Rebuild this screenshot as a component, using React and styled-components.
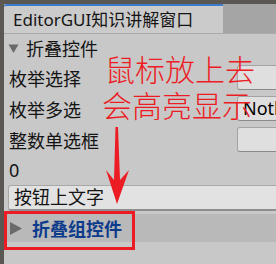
import React from 'react'
import styled, { createGlobalStyle } from 'styled-components'

const GlobalStyle = createGlobalStyle`
  html, body {
    margin: 0;
    padding: 0;
    background: #5b5854;
    overflow: hidden;
  }
  body {
    width: 276px;
    height: 264px;
    font-family: 'Noto Sans', 'Noto Sans CJK SC', sans-serif;
  }
`

const Window = styled.div`
  position: relative;
  margin: 4px 0 0 4px;
  height: 260px;
  background: #c8c8c8;
  display: flex;
  flex-direction: column;
  overflow: hidden;
  color: #141414;
  font-size: 18px;
`

const TabBar = styled.div`
  height: 29px;
  display: flex;
  background: #a5a5a5;
  border-bottom: 1px solid #aaaaaa;
`

const Tab = styled.div`
  width: 210px;
  height: 27px;
  padding-left: 9px;
  background: #cbcbcb;
  border-top: 2px solid #3b7bd0;
  border-top-left-radius: 3px;
  font-size: 17px;
  line-height: 28px;
  white-space: nowrap;
`

const FoldHeader = styled.div`
  height: 28px;
  display: flex;
  align-items: center;
  gap: ${(p) => p.gap || 7}px;
  padding-left: ${(p) => p.indent || 4}px;
  background: ${(p) => p.bg || 'transparent'};
  color: ${(p) => p.color || 'inherit'};
  font-weight: ${(p) => (p.bold ? 700 : 400)};
  margin-top: ${(p) => p.top || 0}px;
  position: relative;
`

const Row = styled.div`
  height: ${(p) => p.h || 31}px;
  display: flex;
  align-items: center;
  padding-left: 5px;
  white-space: nowrap;
`

const Field = styled.div`
  margin-left: auto;
  width: 46px;
  height: 23px;
  flex-shrink: 0;
  margin-right: -14px;
  background: #dfdfdf;
  border: 1px solid #a3a3a3;
  border-bottom-color: #8a8a8a;
  border-radius: 3px;
  padding-left: 5px;
  line-height: 23px;
  color: #000;
  overflow: hidden;
  white-space: nowrap;
`

const Button = styled.div`
  margin: 1px -20px 0 4px;
  height: 23px;
  background: #e2e2e2;
  border: 1px solid #a8a8a8;
  border-bottom: 2px solid #8e8e8e;
  border-radius: 3px;
  padding-left: 5px;
  line-height: 23px;
  white-space: nowrap;
`

const Highlight = styled.div`
  position: absolute;
  left: 0;
  top: -3px;
  width: 125px;
  height: 33px;
  border: 3px solid #ec1c24;
  pointer-events: none;
`

const Note = styled.div`
  position: absolute;
  left: 98px;
  top: 46px;
  color: #ec1c24;
  font-size: 30px;
  font-weight: 200;
  line-height: 36px;
  font-family: 'Noto Sans CJK SC', sans-serif;
  white-space: nowrap;
`

const NoteLine = styled.div`
  padding-left: ${(p) => p.shift || 0}px;
`

const Arrow = styled.svg`
  position: absolute;
  left: 96px;
  top: 116px;
`

const Triangle = ({ open }) =>
  open ? (
    <svg width="11" height="11" viewBox="0 0 11 11">
      <polygon points="0.5,1.5 10.5,1.5 5.5,10" fill="#6a6a6a" />
    </svg>
  ) : (
    <svg width="12" height="13" viewBox="0 0 12 13">
      <polygon points="0,0 12,6.5 0,13" fill="#6a6a6a" />
    </svg>
  )

export default function App() {
  return (
    <>
      <GlobalStyle />
      <Window>
        <TabBar>
          <Tab>EditorGUI知识讲解窗口</Tab>
        </TabBar>
        <FoldHeader>
          <Triangle open />
          折叠控件
        </FoldHeader>
        <Row>
          枚举选择
          <Field />
        </Row>
        <Row>
          枚举多选
          <Field>Nothing</Field>
        </Row>
        <Row>
          整数单选框
          <Field />
        </Row>
        <Row h={29}>0</Row>
        <Button>按钮上文字</Button>
        <FoldHeader top={3} indent={6} gap={10} bg="#b9b9b9" color="#0d3b8c" bold>
          <Triangle />
          折叠组控件
          <Highlight />
        </FoldHeader>
        <Note>
          <NoteLine shift={3}>鼠标放上去</NoteLine>
          <NoteLine>会高亮显示</NoteLine>
        </Note>
        <Arrow width="36" height="90" viewBox="0 0 36 90">
          <polygon
            points="15.5,7 18,7 20,60 29,50 17,84 6,50 14,60"
            fill="#ec1c24"
          />
        </Arrow>
      </Window>
    </>
  )
}
